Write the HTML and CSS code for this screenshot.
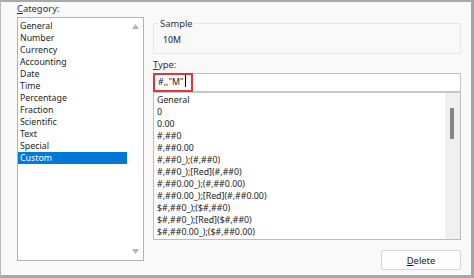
FILE: index.html
```html
<!DOCTYPE html>
<html>
<head>
<meta charset="utf-8">
<link rel="stylesheet" href="styles.css">
</head>
<body>
<div class="dialog">
  <div class="left">
    <div class="label"><u>C</u>ategory:</div>
    <div class="catlist">
      <div class="items">
        <div class="item">General</div>
        <div class="item">Number</div>
        <div class="item">Currency</div>
        <div class="item">Accounting</div>
        <div class="item">Date</div>
        <div class="item">Time</div>
        <div class="item">Percentage</div>
        <div class="item">Fraction</div>
        <div class="item">Scientific</div>
        <div class="item">Text</div>
        <div class="item">Special</div>
        <div class="item selected">Custom</div>
      </div>
      <div class="vscroll">
        <svg class="arrow" width="7" height="5" viewBox="0 0 7 5"><path d="M0 5 L3.5 0 L7 5 Z" fill="#b4b4b4"/></svg>
        <svg class="arrow" width="7" height="5" viewBox="0 0 7 5"><path d="M0 0 L3.5 5 L7 0 Z" fill="#b4b4b4"/></svg>
      </div>
    </div>
  </div>
  <div class="right">
    <fieldset class="sample">
      <legend>Sample</legend>
      <div class="sample-val">10M</div>
    </fieldset>
    <div class="label type-label"><u>T</u>ype:</div>
    <div class="typebox">
      <span class="typed">#,,"M"<span class="caret"></span></span>
      <div class="highlight"></div>
    </div>
    <div class="fmtlist">
      <div class="items">
        <div class="item">General</div>
        <div class="item">0</div>
        <div class="item">0.00</div>
        <div class="item">#,##0</div>
        <div class="item">#,##0.00</div>
        <div class="item">#,##0_);(#,##0)</div>
        <div class="item">#,##0_);[Red](#,##0)</div>
        <div class="item">#,##0.00_);(#,##0.00)</div>
        <div class="item">#,##0.00_);[Red](#,##0.00)</div>
        <div class="item">$#,##0_);($#,##0)</div>
        <div class="item">$#,##0_);[Red]($#,##0)</div>
        <div class="item">$#,##0.00_);($#,##0.00)</div>
      </div>
      <div class="scrollbar"><div class="thumb"></div></div>
    </div>
    <div class="btnrow"><button class="btn"><u>D</u>elete</button></div>
  </div>
</div>
</body>
</html>
```
FILE: styles.css
```css
html, body {
  margin: 0;
  padding: 0;
  background: #f9f9f9;
}
.dialog {
  width: 474px;
  height: 278px;
  box-sizing: border-box;
  border-top: 2px solid #a9a9a9;
  border-left: 1px solid #b9b9b9;
  border-right: 3px solid #a3a3a3;
  border-bottom: 3px solid #a9a9a9;
  background: #f9f9f9;
  padding-left: 16px;
  display: grid;
  grid-template-columns: 127px 308px;
  column-gap: 9px;
  font-family: "Noto Sans", "Open Sans", sans-serif;
  font-size: 8.8px;
  color: #1b1b1b;
}
.label {
  height: 15px;
  line-height: 13px;
  font-size: 9.4px;
  color: #333;
}
.label u { text-decoration-thickness: 1px; text-underline-offset: 1px; }
.catlist {
  height: 244px;
  box-sizing: border-box;
  border: 1px solid #b2b2b2;
  background: #fff;
  display: flex;
}
.catlist .items {
  flex: 1;
  padding-top: 2px;
}
.item {
  height: 12px;
  line-height: 12px;
  padding-left: 2px;
  white-space: nowrap;
}
.catlist .item.selected {
  background: #0078d7;
  color: #fff;
}
.catlist .items { margin-right: 0; }
.vscroll {
  width: 16px;
  display: flex;
  flex-direction: column;
  justify-content: space-between;
  align-items: center;
  padding: 6px 0 6px;
}
.right {
  display: flex;
  flex-direction: column;
}
.sample {
  margin: 16px 0 0 0;
  padding: 0 0 0 9px;
  height: 36px;
  box-sizing: border-box;
  border: 1px solid #e7e7e7;
  border-radius: 0;
}
.sample legend {
  padding: 0 2px;
  margin-left: -5px;
  font-size: 9.4px;
  line-height: 11px;
  color: #333;
}
.sample-val {
  margin-top: 5px;
  line-height: 12px;
}
.type-label {
  margin-top: 4px;
  height: 15px;
  line-height: 14px;
}
.typebox {
  position: relative;
  height: 19px;
  box-sizing: border-box;
  border: 1px solid #c4c4c4;
  background: #fff;
  padding-left: 4px;
  line-height: 16px;
}
.caret {
  display: inline-block;
  width: 1px;
  height: 12px;
  background: #000;
  vertical-align: -2px;
  margin-left: 1px;
}
.highlight {
  position: absolute;
  left: -1px;
  top: -1px;
  width: 40px;
  height: 19px;
  box-sizing: border-box;
  border: 2px solid #d43a3f;
}
.fmtlist {
  height: 148px;
  box-sizing: border-box;
  border: 1px solid #bdbdbd;
  border-top: 1px solid #c8c8c8;
  background: #fff;
  display: flex;
}
.fmtlist .items {
  flex: 1;
  padding-top: 1px;
  padding-left: 1px;
  color: #222;
}
.scrollbar {
  width: 15px;
  background: #f0f0f0;
  position: relative;
}
.thumb {
  position: absolute;
  left: 5px;
  top: 15px;
  width: 4px;
  height: 31px;
  background: #858585;
}
.btnrow {
  display: flex;
  justify-content: flex-end;
  margin-top: 10px;
}
.btn {
  width: 80px;
  height: 20px;
  margin-right: 0;
  border: 1px solid #d6d6d6;
  border-radius: 2px;
  background: #fdfdfd;
  font-family: "Noto Sans", "Open Sans", sans-serif;
  font-size: 9.4px;
  color: #222;
  padding: 0;
}
```
